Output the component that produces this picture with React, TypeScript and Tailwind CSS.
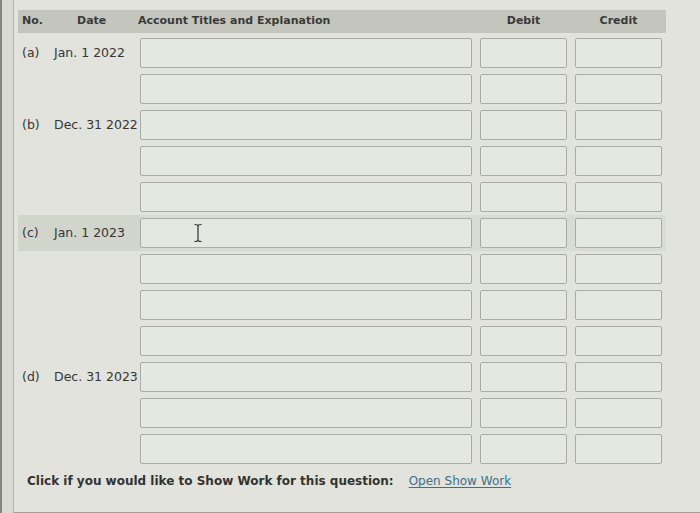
import React from "react";

type Row = { no?: string; date?: string; hl?: boolean };

const rows: Row[] = [
  { no: "(a)", date: "Jan. 1 2022" },
  {},
  { no: "(b)", date: "Dec. 31 2022" },
  {},
  {},
  { no: "(c)", date: "Jan. 1 2023", hl: true },
  {},
  {},
  {},
  { no: "(d)", date: "Dec. 31 2023" },
  {},
  {},
];

const font = { fontFamily: '"DejaVu Sans", Verdana, sans-serif' };

function Box({ w }: { w: string }) {
  return (
    <div
      className={`${w} h-[30px] rounded-[2px] border border-[#a9aca5] bg-[#e5e7e1]`}
    />
  );
}

export default function App() {
  return (
    <div
      className="w-[700px] h-[513px] overflow-hidden bg-[#e1e3dc] flex text-[#363636]"
      style={font}
    >
      <div className="w-[2px] bg-[#85877f]" />
      <div className="w-[11px] bg-[#d8dad3]" />
      <div className="w-[1px] bg-[#b3b5ae]" />
      <div className="flex-1 flex flex-col pl-[4px] pt-[10px] border-b border-[#9d9f98] relative">
        {/* header */}
        <div className="w-[648px] h-[23px] bg-[#c4c6bd] flex items-center text-[11px] font-bold text-[#3a3a3a]">
          <div className="w-[122px] flex">
            <span className="w-[59px] pl-[4px]">No.</span>
            <span>Date</span>
          </div>
          <div className="w-[332px] -ml-[2px]">Account Titles and Explanation</div>
          <div className="w-[87px] ml-[10px] text-center">Debit</div>
          <div className="w-[87px] ml-[8px] text-center">Credit</div>
        </div>

        {/* rows */}
        <div className="mt-[2px] flex flex-col">
          {rows.map((r, i) => (
            <div
              key={i}
              className={`w-[648px] h-[36px] flex items-center ${
                r.hl ? "bg-[#d9dcd4]" : ""
              }`}
            >
              <div
                className={`w-[122px] h-full flex items-center text-[12.5px] ${
                  r.hl ? "bg-[#d2d5cc]" : ""
                }`}
              >
                {r.no && (
                  <>
                    <span className="w-[36px] pl-[4px]">{r.no}</span>
                    <span>{r.date}</span>
                  </>
                )}
              </div>
              <Box w="w-[332px]" />
              <div className="w-[8px]" />
              <Box w="w-[87px]" />
              <div className="w-[8px]" />
              <Box w="w-[87px]" />
            </div>
          ))}
        </div>

        {/* footer */}
        <div className="mt-[5px] pl-[9px] flex items-center text-[12px]">
          <span className="font-bold text-[#333]">
            Click if you would like to Show Work for this question:
          </span>
          <a className="ml-[15px] text-[12px] text-[#3f6f8c] underline underline-offset-2">
            Open Show Work
          </a>
        </div>

        {/* text cursor over (c) row */}
        <svg
          className="absolute left-[179px] top-[223px]"
          width="10"
          height="20"
          viewBox="0 0 10 20"
        >
          <path
            d="M1.5 1.5 Q5 1.5 5 3 Q5 1.5 8.5 1.5 M5 3 V17 M1.5 18.5 Q5 18.5 5 17 Q5 18.5 8.5 18.5"
            fill="none"
            stroke="#2e2e2e"
            strokeWidth="1.2"
          />
        </svg>
      </div>
    </div>
  );
}
